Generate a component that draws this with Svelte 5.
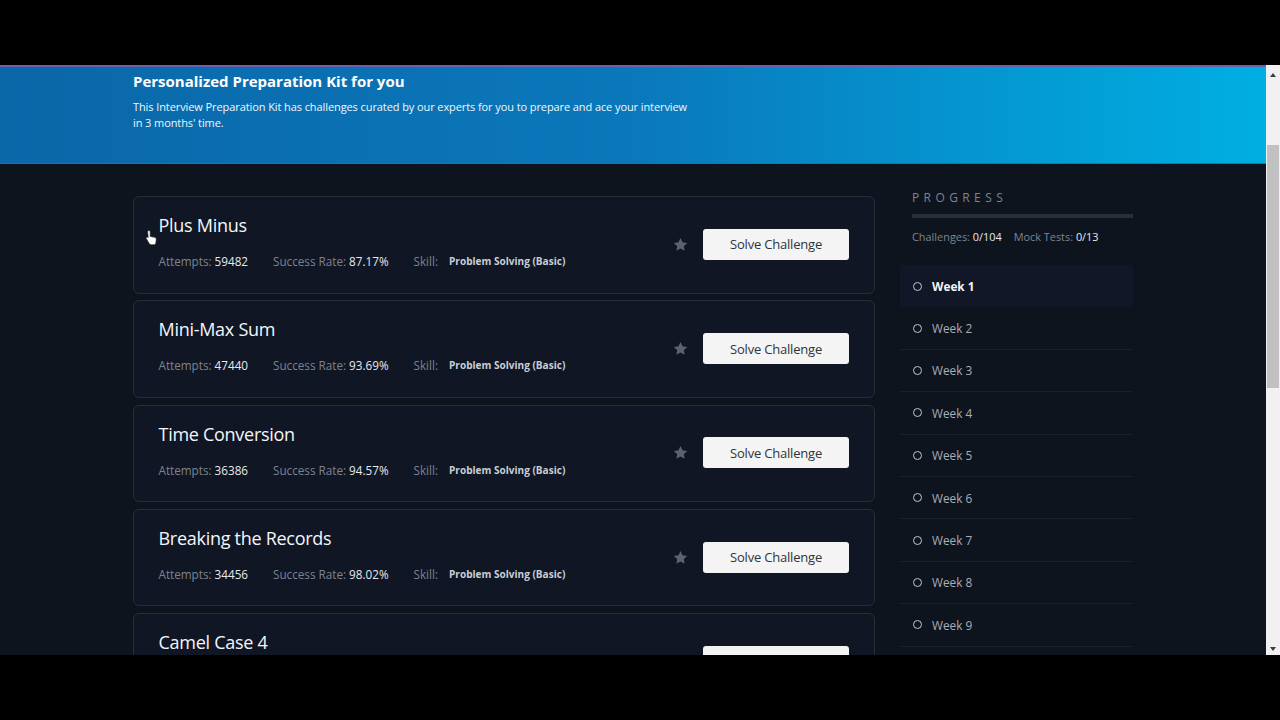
<script>
	const challenges = [
		{ name: 'Plus Minus', attempts: 59482, rate: '87.17%' },
		{ name: 'Mini-Max Sum', attempts: 47440, rate: '93.69%' },
		{ name: 'Time Conversion', attempts: 36386, rate: '94.57%' },
		{ name: 'Breaking the Records', attempts: 34456, rate: '98.02%' },
		{ name: 'Camel Case 4' }
	];
	const weeks = [1, 2, 3, 4, 5, 6, 7, 8, 9];
</script>

<div class="frame">
	<div class="viewport">
		<div class="page">
			<section class="hero">
				<h1>Personalized Preparation Kit for you</h1>
				<p>This Interview Preparation Kit has challenges curated by our experts for you to prepare and ace your interview in 3 months' time.</p>
			</section>

			<div class="content">
				<div class="cards">
					{#each challenges as item}
						<article class="card">
							<div class="info">
								<h2>{item.name}</h2>
								{#if item.attempts}
									<div class="meta">
										<span class="stat">Attempts: <b>{item.attempts}</b></span>
										<span class="stat">Success Rate: <b>{item.rate}</b></span>
										<span class="skill-label">Skill:</span>
										<span class="skill">Problem Solving (Basic)</span>
									</div>
								{/if}
							</div>
							<svg class="star" viewBox="0 0 24 24" aria-hidden="true">
								<path d="M12 1.600l3.200 6.900 7.500.9-5.500 5.200 1.400 7.500L12 18.400l-6.600 3.700 1.400-7.500L1.300 9.400l7.500-.9z" />
							</svg>
							<button class="solve">Solve Challenge</button>
						</article>
					{/each}
				</div>

				<aside class="side">
					<h3>PROGRESS</h3>
					<div class="bar"></div>
					<div class="counts">
						<span>Challenges: <b>0/104</b></span>
						<span>Mock Tests: <b>0/13</b></span>
					</div>
					<ul class="weeks">
						{#each weeks as week}
							<li class:current={week === 1}>
								<span class="dot"></span>
								Week {week}
							</li>
						{/each}
					</ul>
				</aside>
			</div>
		</div>

		<div class="scrollbar">
			<span class="arrow up"></span>
			<div class="track"><div class="thumb"></div></div>
			<span class="arrow down"></span>
		</div>

		<svg class="cursor" viewBox="0 0 12 16" aria-hidden="true">
			<path d="M3.600 1c.8 0 1.200.6 1.200 1.300v4.200l4 .9c1 .2 1.600.9 1.600 1.900l-.4 3.200c-.1 1-.8 1.700-1.800 1.700H5.600c-.7 0-1.200-.3-1.600-.9L1.300 8.800c-.4-.6-.2-1.200.3-1.500.5-.3 1-.1 1.400.3l-.6-5.300C2.400 1.600 2.900 1 3.600 1z" />
		</svg>
	</div>
</div>

<style>
	:global(body) {
		background: #000;
		font-family: 'Open Sans', 'Noto Sans', sans-serif;
	}

	.frame {
		height: 720px;
		padding: 65px 0;
		box-sizing: border-box;
		overflow: hidden;
		background: #000;
	}

	.viewport {
		position: relative;
		display: flex;
		height: 590px;
		overflow: hidden;
		background: #0e141e;
	}

	.page {
		flex: 1;
		min-width: 0;
	}

	.hero {
		box-sizing: border-box;
		height: 99px;
		padding: 5px 0 0 133px;
		border-top: 2px solid #6a5fb0;
		border-bottom: 1px solid #2a6f9e;
		background: linear-gradient(90deg, #0a67a8 0%, #0a78bb 50%, #00afe2 100%);
		color: #fff;
	}

	.hero h1 {
		margin: 0;
		font-size: 15px;
		line-height: 19px;
		font-weight: 700;
	}

	.hero p {
		width: 560px;
		margin: 8px 0 0;
		font-size: 11px;
		line-height: 16px;
		letter-spacing: -0.09px;
		color: #eef7fc;
	}

	.content {
		display: flex;
		align-items: flex-start;
		padding: 32px 0 0 133px;
	}

	.cards {
		display: flex;
		flex-direction: column;
		gap: 6.800px;
		width: 742px;
		flex: none;
	}

	.card {
		display: flex;
		align-items: center;
		box-sizing: border-box;
		height: 97.500px;
		padding: 0 25px 1px 24.500px;
		border: 1px solid #272d38;
		border-radius: 6px;
		background: #101624;
	}

	.info {
		flex: 1;
		min-width: 0;
		align-self: flex-start;
		padding-top: 16px;
	}

	.card h2 {
		margin: 0 0 14px;
		font-size: 18px;
		line-height: 25px;
		font-weight: 400;
		letter-spacing: -0.28px;
		color: #f3f6fa;
	}

	.meta {
		display: flex;
		align-items: center;
		font-size: 11.700px;
		line-height: 18px;
		color: #7d8490;
	}

	.stat {
		margin-right: 25px;
	}

	.meta b,
	.counts b {
		font-weight: 400;
		color: #e6e9ee;
	}

	.skill-label {
		margin-right: 11px;
	}

	.skill {
		font-size: 10.050px;
		font-weight: 700;
		color: #c9ced6;
	}

	.star {
		width: 15px;
		height: 15px;
		margin-right: 15px;
		fill: #5c626e;
	}

	.solve {
		width: 146px;
		height: 31px;
		padding: 0;
		border: none;
		border-radius: 3px;
		background: #f4f4f4;
		color: #2f333a;
		font-family: inherit;
		font-size: 13px;
		letter-spacing: -0.2px;
		font-weight: 400;
	}

	.side {
		width: 233px;
		margin-left: 25px;
		flex: none;
	}

	.side h3 {
		margin: -5px 0 0 12px;
		font-size: 12px;
		line-height: 14px;
		font-weight: 400;
		letter-spacing: 4.400px;
		color: #7d8490;
	}

	.bar {
		height: 4px;
		margin: 9px 0 0 12px;
		width: 221px;
		background: #2a303b;
	}

	.counts {
		display: flex;
		gap: 12px;
		margin: 10px 0 0 12px;
		font-size: 10.900px;
		line-height: 18px;
		color: #7d8490;
	}

	.weeks {
		margin: 19px 0 0;
		padding: 0;
		list-style: none;
	}

	.weeks li {
		display: flex;
		align-items: center;
		gap: 10px;
		box-sizing: border-box;
		height: 42.400px;
		padding-left: 13px;
		border-bottom: 1px solid #1a202b;
		font-size: 11.800px;
		color: #a9aeb7;
	}

	.weeks li.current {
		border-bottom: none;
		background: #111726;
		font-weight: 700;
		color: #f3f5f8;
	}

	.dot {
		box-sizing: border-box;
		width: 9px;
		height: 9px;
		border: 1px solid #c3c7ce;
		border-radius: 50%;
	}

	.scrollbar {
		display: flex;
		flex-direction: column;
		align-items: center;
		width: 14px;
		flex: none;
		background: #f1f1f1;
	}

	.arrow {
		flex: none;
		width: 0;
		height: 0;
		border-left: 3.500px solid transparent;
		border-right: 3.500px solid transparent;
	}

	.arrow.up {
		margin: 8px 0 6px;
		border-bottom: 4px solid #3c3c3c;
	}

	.arrow.down {
		margin: 6px 0 4px;
		border-top: 4px solid #3c3c3c;
	}

	.track {
		flex: 1;
		width: 100%;
		padding-top: 62px;
		box-sizing: border-box;
	}

	.thumb {
		height: 243px;
		margin-left: 1px;
		width: 12px;
		background: #c1c1c1;
	}

	.cursor {
		position: absolute;
		left: 145px;
		top: 164px;
		width: 13px;
		height: 18px;
		fill: #fff;
		stroke: #222;
		stroke-width: 0.6;
	}
</style>
